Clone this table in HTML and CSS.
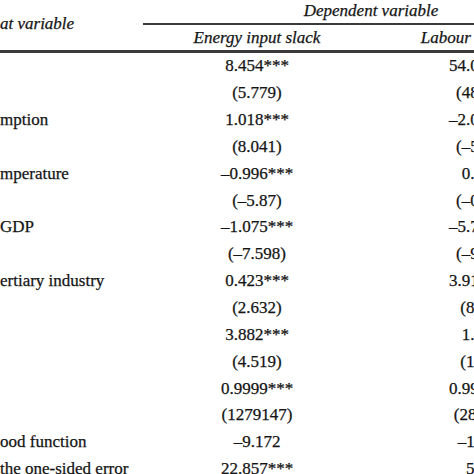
FILE: index.html
```html
<!DOCTYPE html>
<html>
<head>
<meta charset="utf-8">
<link rel="stylesheet" href="styles.css">
</head>
<body>
<table class="t">
  <colgroup><col class="c0"><col class="c1"><col class="c2"></colgroup>
  <thead>
    <tr class="h1">
      <th rowspan="2" class="lab">at variable</th>
      <th colspan="2" class="dep">Dependent variable</th>
    </tr>
    <tr class="h2">
      <th class="sub">Energy input slack</th>
      <th class="sub">Labour input slack</th>
    </tr>
  </thead>
  <tbody>
    <tr><td></td><td>8.454***</td><td>54.021***</td></tr>
    <tr><td></td><td>(5.779)</td><td>(48.563)</td></tr>
    <tr><td>mption</td><td>1.018***</td><td>–2.047***</td></tr>
    <tr><td></td><td>(8.041)</td><td>(–5.124)</td></tr>
    <tr><td>mperature</td><td>–0.996***</td><td>0.0386</td></tr>
    <tr><td></td><td>(–5.87)</td><td>(–0.528)</td></tr>
    <tr><td>GDP</td><td>–1.075***</td><td>–5.736***</td></tr>
    <tr><td></td><td>(–7.598)</td><td>(–9.214)</td></tr>
    <tr><td>ertiary industry</td><td>0.423***</td><td>3.9125***</td></tr>
    <tr><td></td><td>(2.632)</td><td>(8.305)</td></tr>
    <tr><td></td><td>3.882***</td><td>1.738*</td></tr>
    <tr><td></td><td>(4.519)</td><td>(1.962)</td></tr>
    <tr><td></td><td>0.9999***</td><td>0.9998***</td></tr>
    <tr><td></td><td>(1279147)</td><td>(284713)</td></tr>
    <tr><td>ood function</td><td>–9.172</td><td>–11.305</td></tr>
    <tr><td>the one-sided error</td><td>22.857***</td><td>5.216</td></tr>
  </tbody>
</table>
</body>
</html>
```

FILE: styles.css
```css
html, body {
  margin: 0;
  padding: 0;
  background: #ffffff;
}
body {
  width: 474px;
  height: 474px;
  overflow: hidden;
  font-family: "Liberation Serif", "Times New Roman", serif;
  font-size: 17px;
  color: #141414;
  -webkit-text-stroke: 0.25px #141414;
}
.t {
  border-collapse: separate;
  border-spacing: 0;
  table-layout: fixed;
  width: 599px;
}
.c0 { width: 143px; }
.c1 { width: 228px; }
.c2 { width: 228px; }
th, td {
  padding: 0;
  white-space: nowrap;
  box-sizing: border-box;
}
th {
  font-weight: normal;
  font-style: italic;
}
.h1 th.dep {
  height: 25px;
  border-bottom: 2px solid #3a3a3a;
  text-align: center;
  vertical-align: middle;
  padding-bottom: 2px;
}
.lab {
  text-align: left;
  vertical-align: middle;
  border-bottom: 3px solid #3a3a3a;
  padding-bottom: 2px;
}
.h2 th.sub {
  height: 28px;
  border-bottom: 3px solid #3a3a3a;
  text-align: center;
  vertical-align: middle;
}
tbody td {
  height: 26.85px;
  text-align: center;
  vertical-align: middle;
}
tbody td:first-child {
  text-align: left;
}
```
